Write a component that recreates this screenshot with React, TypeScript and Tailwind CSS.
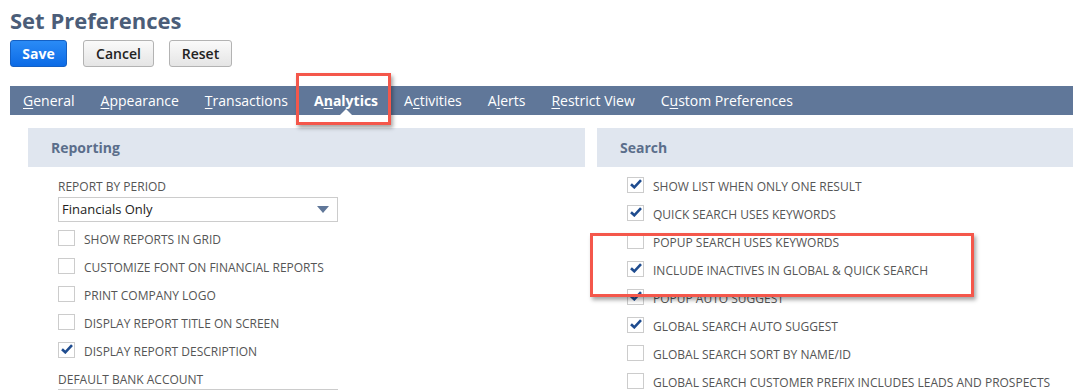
import React from 'react';

const tabs = [
  { pre: '', key: 'G', post: 'eneral' },
  { pre: '', key: 'A', post: 'ppearance' },
  { pre: '', key: 'T', post: 'ransactions' },
  { pre: 'A', key: 'n', post: 'alytics', active: true },
  { pre: 'A', key: 'c', post: 'tivities' },
  { pre: 'A', key: 'l', post: 'erts' },
  { pre: '', key: 'R', post: 'estrict View' },
  { pre: 'C', key: 'u', post: 'stom Preferences' },
];

const reporting = [
  { label: 'SHOW REPORTS IN GRID', checked: false },
  { label: 'CUSTOMIZE FONT ON FINANCIAL REPORTS', checked: false },
  { label: 'PRINT COMPANY LOGO', checked: false },
  { label: 'DISPLAY REPORT TITLE ON SCREEN', checked: false },
  { label: 'DISPLAY REPORT DESCRIPTION', checked: true },
];

const search = [
  { label: 'SHOW LIST WHEN ONLY ONE RESULT', checked: true },
  { label: 'QUICK SEARCH USES KEYWORDS', checked: true },
  { label: 'POPUP SEARCH USES KEYWORDS', checked: false },
  { label: 'INCLUDE INACTIVES IN GLOBAL & QUICK SEARCH', checked: true },
  { label: 'POPUP AUTO SUGGEST', checked: true },
  { label: 'GLOBAL SEARCH AUTO SUGGEST', checked: true },
  { label: 'GLOBAL SEARCH SORT BY NAME/ID', checked: false },
  { label: 'GLOBAL SEARCH CUSTOMER PREFIX INCLUDES LEADS AND PROSPECTS', checked: false },
];

function CheckRow({ label, checked }: { label: string; checked: boolean }) {
  return (
    <div className="flex items-center h-[28px]">
      <div className="relative w-[17px] h-[16px] border border-[#cccccc] bg-white mr-[9px] -mt-[5px] shrink-0">
        {checked && (
          <svg className="absolute left-[2px] top-[1px]" width="12" height="10" viewBox="0 0 12 10">
            <path d="M1 5.2 L4.3 8.3 L11 1.2" fill="none" stroke="#1f4c8f" strokeWidth="2.6" strokeLinejoin="miter" />
          </svg>
        )}
      </div>
      <span className="text-[12px] text-[#555555] whitespace-nowrap">{label}</span>
    </div>
  );
}

function Select({ value }: { value: string }) {
  return (
    <div className="flex items-center justify-between w-[280px] h-[25px] border border-[#cccccc] bg-white pl-[3px] pr-[8px]">
      <span className="text-[13px] text-[#222222]">{value}</span>
      <svg width="12" height="7" viewBox="0 0 12 7">
        <path d="M0 0 H12 L6 7 Z" fill="#607799" />
      </svg>
    </div>
  );
}

export default function App() {
  return (
    <div className="relative w-[1073px] h-[390px] overflow-hidden bg-white" style={{ fontFamily: '"Open Sans", "Liberation Sans", sans-serif' }}>
      <div className="pl-[10px]">
        {/* Title */}
        <h1 className="mt-[6px] text-[22px] leading-[28px] font-bold text-[#4b5d78]">Set Preferences</h1>

        {/* Buttons */}
        <div className="mt-[6px] flex items-center">
          <button className="h-[27px] w-[57px] rounded-[3px] border border-[#1460c4] bg-gradient-to-b from-[#2a8bf6] to-[#0b6be6] text-white text-[14px] font-bold">
            Save
          </button>
          <button className="ml-[16px] h-[27px] w-[71px] rounded-[3px] border border-[#b3b3b3] bg-gradient-to-b from-[#fafafa] to-[#e5e5e5] text-[#222222] text-[14px] font-semibold">
            Cancel
          </button>
          <button className="ml-[15px] h-[27px] w-[63px] rounded-[3px] border border-[#b3b3b3] bg-gradient-to-b from-[#fafafa] to-[#e5e5e5] text-[#222222] text-[14px] font-semibold">
            Reset
          </button>
        </div>

        {/* Tabs */}
        <div className="mt-[19px] h-[29px] bg-[#607799] flex items-center">
          {tabs.map((t, i) => (
            <div
              key={i}
              className={`relative h-full flex items-center px-[13px] text-[14px] text-white whitespace-nowrap ${t.active ? 'font-bold' : ''}`}
            >
              <span>
                {t.pre}
                <span className="underline underline-offset-2">{t.key}</span>
                {t.post}
              </span>
              {t.active && (
                <span className="absolute bottom-0 left-1/2 -translate-x-1/2 w-0 h-0 border-l-[6px] border-r-[6px] border-b-[6px] border-l-transparent border-r-transparent border-b-white" />
              )}
            </div>
          ))}
        </div>
      </div>

      {/* Panels */}
      <div className="mt-[13px] pl-[28px] flex gap-[12px]">
        <div className="w-[557px] shrink-0">
          <div className="h-[39px] bg-[#e0e6ef] flex items-center pl-[23px] text-[14px] font-bold text-[#5b6e8b]">Reporting</div>
          <div className="pl-[30px] pt-[11px]">
            <div className="text-[12px] leading-[18px] text-[#555555]">REPORT BY PERIOD</div>
            <div className="mt-[1px]">
              <Select value="Financials Only" />
            </div>
            <div className="mt-[4px]">
              {reporting.map((r) => (
                <CheckRow key={r.label} {...r} />
              ))}
            </div>
            <div className="mt-[5px] text-[12px] leading-[18px] text-[#555555]">DEFAULT BANK ACCOUNT</div>
            <div className="w-[280px] h-[25px] border border-[#cccccc]" />
          </div>
        </div>
        <div className="w-[557px] shrink-0">
          <div className="h-[39px] bg-[#e0e6ef] flex items-center pl-[23px] text-[14px] font-bold text-[#5b6e8b]">Search</div>
          <div className="pl-[30px] pt-[6px]">
            {search.map((r) => (
              <CheckRow key={r.label} {...r} />
            ))}
          </div>
        </div>
      </div>

      {/* Annotation boxes */}
      <div className="absolute left-[296px] top-[73px] w-[95px] h-[52px] border-[3px] border-[#f4574b] shadow-[2px_3px_4px_rgba(0,0,0,0.35)]" />
      <div className="absolute left-[590px] top-[233px] w-[384px] h-[64px] border-[3px] border-[#f4574b] shadow-[2px_3px_4px_rgba(0,0,0,0.35)]" />
    </div>
  );
}
